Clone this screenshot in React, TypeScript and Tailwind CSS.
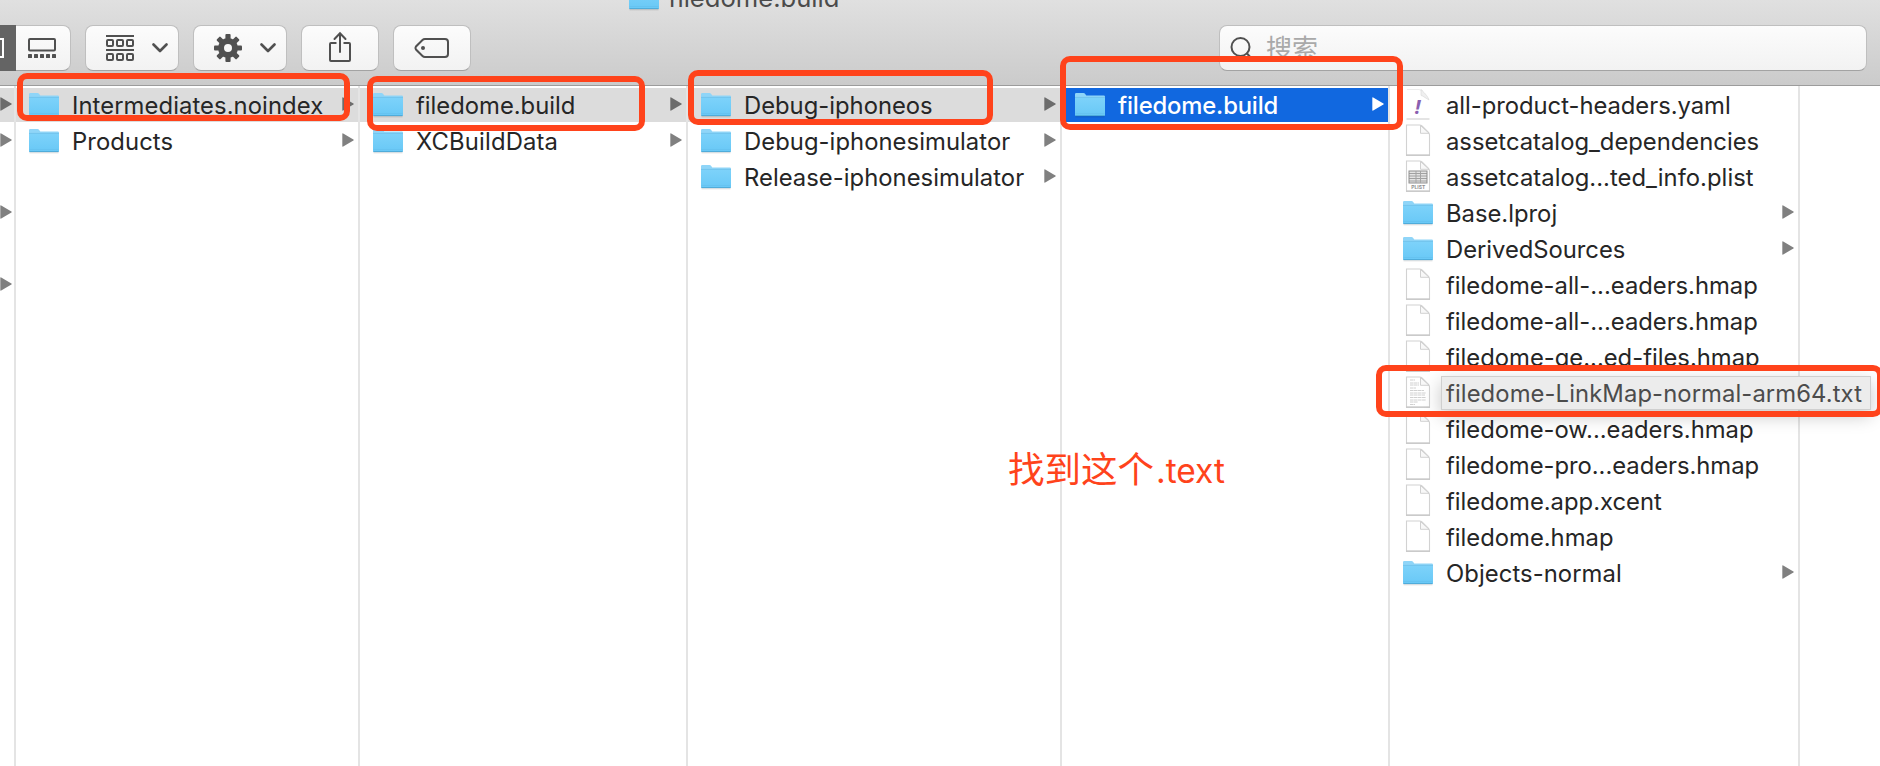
import clsx from 'clsx';

type Kind = 'folder' | 'file' | 'yaml' | 'plist' | 'txt' | 'none';

type Item = {
  name: string;
  kind: Kind;
  tracking?: string;
  state?: 'path' | 'active' | 'hover';
};

type Column = {
  id: string;
  width: string;
  items: Item[];
};

const columns: Column[] = [
  {
    id: 'root',
    width: 'w-4',
    items: [
      { name: '', kind: 'folder', state: 'path' },
      { name: '', kind: 'folder' },
      { name: '', kind: 'none' },
      { name: '', kind: 'folder' },
      { name: '', kind: 'none' },
      { name: '', kind: 'folder' },
    ],
  },
  {
    id: 'build',
    width: 'w-[344px]',
    items: [
      { name: 'Intermediates.noindex', kind: 'folder', state: 'path', tracking: 'tracking-[0.08px]' },
      { name: 'Products', kind: 'folder', tracking: 'tracking-[0.1px]' },
    ],
  },
  {
    id: 'intermediates',
    width: 'w-[328px]',
    items: [
      { name: 'filedome.build', kind: 'folder', state: 'path' },
      { name: 'XCBuildData', kind: 'folder', tracking: 'tracking-[0.16px]' },
    ],
  },
  {
    id: 'project',
    width: 'w-[374px]',
    items: [
      { name: 'Debug-iphoneos', kind: 'folder', state: 'path' },
      { name: 'Debug-iphonesimulator', kind: 'folder', tracking: 'tracking-[0.06px]' },
      { name: 'Release-iphonesimulator', kind: 'folder', tracking: 'tracking-[0.04px]' },
    ],
  },
  {
    id: 'configuration',
    width: 'w-[328px]',
    items: [{ name: 'filedome.build', kind: 'folder', state: 'active', tracking: 'tracking-[-0.15px]' }],
  },
  {
    id: 'target',
    width: 'w-[410px]',
    items: [
      { name: 'all-product-headers.yaml', kind: 'yaml', tracking: 'tracking-[-0.03px]' },
      { name: 'assetcatalog_dependencies', kind: 'file' },
      { name: 'assetcatalog...ted_info.plist', kind: 'plist', tracking: 'tracking-[0.03px]' },
      { name: 'Base.lproj', kind: 'folder' },
      { name: 'DerivedSources', kind: 'folder', tracking: 'tracking-[-0.03px]' },
      { name: 'filedome-all-...eaders.hmap', kind: 'file', tracking: 'tracking-[-0.02px]' },
      { name: 'filedome-all-...eaders.hmap', kind: 'file', tracking: 'tracking-[-0.02px]' },
      { name: 'filedome-ge...ed-files.hmap', kind: 'file' },
      { name: 'filedome-LinkMap-normal-arm64.txt', kind: 'txt', state: 'hover', tracking: 'tracking-[0.1px]' },
      { name: 'filedome-ow...eaders.hmap', kind: 'file', tracking: 'tracking-[-0.02px]' },
      { name: 'filedome-pro...eaders.hmap', kind: 'file', tracking: 'tracking-[-0.03px]' },
      { name: 'filedome.app.xcent', kind: 'file' },
      { name: 'filedome.hmap', kind: 'file' },
      { name: 'Objects-normal', kind: 'folder', tracking: 'tracking-[0.08px]' },
    ],
  },
];

function FolderIcon() {
  return (
    <svg width="30" height="26" viewBox="0 0 30 26" className="shrink-0">
      <defs>
        <linearGradient id="folder" x1="0" y1="0" x2="0" y2="1">
          <stop offset="0" stopColor="#7dd2fa" />
          <stop offset="1" stopColor="#68c8f6" />
        </linearGradient>
      </defs>
      <path d="M0.5 24.8h29" stroke="#000" strokeOpacity="0.15" />
      <path d="M0 2.2Q0 1 1.2 1H8.5Q9.3 1 9.8 1.6L11.3 3.6H28.8Q30 3.6 30 4.8V10H0z" fill="#8fd5f8" />
      <path d="M0 5.6H30V23Q30 24 29 24H1Q0 24 0 23z" fill="url(#folder)" />
      <path d="M0 5.4H30" stroke="#6abde8" strokeWidth="0.7" />
      <path d="M0.4 23.6h29.2" stroke="#4ba5d2" strokeWidth="0.9" />
      <path d="M0.5 21.5h29" stroke="#62bdea" strokeWidth="0.5" />
    </svg>
  );
}

function FileIcon({ kind }: { kind: Kind }) {
  // yaml has its own artwork: no side borders, only the fold and a base line
  if (kind === 'yaml') {
    return (
      <svg width="26" height="32" viewBox="0 0 26 32" className="mb-px shrink-0">
        <path d="M2 1.5H14L18 3" fill="none" stroke="#ececec" />
        <path d="M16 1.5V7Q16 8 17.5 8L24 12Q23 8 16 1.5z" fill="#efefef" stroke="#d6d6d6" strokeWidth="0.6" />
        <path d="M1.5 31H24.5" stroke="#c9c9c9" strokeWidth="1" />
        <text x="9.8" y="26" className="font-['Open_Sans'] text-[20px] font-bold italic" fill="#8a5fb0">
          !
        </text>
      </svg>
    );
  }

  return (
    <svg width="26" height="32" viewBox="0 0 26 32" className="mb-px shrink-0">
      <path
        d="M1.5 1H14.5Q16 1 17 2L23.5 8.3Q24.5 9.5 24.5 11V31H1.5z"
        fill="#fff"
        stroke="#d2d2d2"
        strokeWidth="1.1"
      />
      <path d="M1 31.2H25" stroke="#bdbdbd" strokeWidth="1" />
      <path d="M15.5 1.5V9.3H24z" fill="#f8f8f8" stroke="#cccccc" strokeWidth="0.9" strokeLinejoin="round" />
      {kind === 'plist' && (
        <g>
          <rect x="4" y="11" width="18" height="12" fill="#e4e4e4" stroke="#8f8f8f" />
          <path d="M4 13.5H22M4 16H22M4 18.5H22M4 21H22" stroke="#8f8f8f" strokeWidth="0.8" />
          <path d="M11 11V23M15.5 11V23" stroke="#a5a5a5" strokeWidth="1" />
          <text x="6.2" y="29.3" className="font-['Inter'] text-[5px] font-bold" fill="#8f8f8f">
            PLIST
          </text>
        </g>
      )}
      {kind === 'txt' && (
        <path
          d="M5 4h5M5 7h9M5 9h9M5 12h6M5 14.5h14M5 17h16M5 19h15M5 21.5h16M5 24h16M5 26h8M5 28.5h5"
          stroke="#c4c4c4"
          strokeWidth="0.8"
          strokeDasharray="3.5 0.4"
        />
      )}
    </svg>
  );
}

function Arrow({ className }: { className: string }) {
  return (
    <svg width="12" height="14" viewBox="0 0 12 14" className={clsx('shrink-0', className)}>
      <path d="M0.3 0.9Q0.3 0 1.2 0.5L11.4 6.4Q12.2 7 11.4 7.6L1.2 13.5Q0.3 14 0.3 13.1z" fill="currentColor" />
    </svg>
  );
}

function Row({ item }: { item: Item }) {
  const { name, kind, state } = item;
  return (
    <li className="h-9 py-px">
      <div
        className={clsx(
          'flex h-full items-center justify-between pr-1',
          state === 'path' && 'bg-[#dcdcdc]',
          state === 'active' && 'bg-[#1168e0]',
        )}
      >
        {name ? (
          <div className="flex items-center pl-[13px]">
            <span className="flex w-[30px] justify-center pb-px">
              {kind === 'folder' ? <FolderIcon /> : <FileIcon kind={kind} />}
            </span>
            {state === 'hover' ? (
              <span className="relative ml-2 flex h-[34px] w-[430px] shrink-0 items-center border border-[#cfcfcf] bg-[#ececec] pt-0.5 pl-1 text-[#4c4c4c] shadow-[0_6px_18px_rgba(0,0,0,0.22)]">
                <span className={clsx('whitespace-nowrap', item.tracking)}>{name}</span>
              </span>
            ) : (
              <span
                className={clsx(
                  'ml-[13px] pt-0.5 whitespace-nowrap',
                  item.tracking,
                  state === 'active' ? 'font-medium text-white' : 'text-[#262626]',
                )}
              >
                {name}
              </span>
            )}
          </div>
        ) : (
          <span />
        )}
        {kind === 'folder' && (
          <Arrow
            className={clsx(
              'mb-0.5',
              state === 'active' ? 'text-white' : state === 'path' ? 'text-[#6c6c6c]' : 'text-[#808080]',
            )}
          />
        )}
      </div>
    </li>
  );
}

function Chevron() {
  return (
    <svg width="16" height="10" viewBox="0 0 16 10" fill="none">
      <path d="M1.5 1.5L8 8L14.5 1.5" stroke="#505050" strokeWidth="2.6" strokeLinecap="round" strokeLinejoin="round" />
    </svg>
  );
}

function GroupIcon() {
  return (
    <svg width="28" height="26" viewBox="0 0 28 26" fill="none" stroke="#505050" strokeWidth="2">
      <path d="M0 1H28M0 15H28" />
      {[5, 19].map((y) =>
        [1, 11, 21].map((x) => <rect key={`${x}-${y}`} x={x} y={y} width="6" height="6" rx="1" />),
      )}
    </svg>
  );
}

function GearIcon() {
  return (
    <svg width="28" height="28" viewBox="-14 -14 28 28">
      <circle r="7" fill="none" stroke="#505050" strokeWidth="6" />
      {[0, 45, 90, 135, 180, 225, 270, 315].map((a) => (
        <rect key={a} x="-2.6" y="-14" width="5.2" height="6" rx="1" fill="#505050" transform={`rotate(${a})`} />
      ))}
    </svg>
  );
}

const toolButton =
  'flex h-[46px] items-center rounded-[8px] border border-[#bfbfbf] border-b-[#a3a3a3] bg-linear-to-b from-[#fcfcfc] to-[#f2f2f2]';

function Toolbar() {
  return (
    <header className="h-[86px] overflow-hidden border-b border-[#9c9c9c] bg-linear-to-b from-[#e0e0e0] to-[#cbcbcb]">
      <div className="-mt-4 flex h-[41px] pl-[629px]">
        <div className="flex h-7 items-center gap-[9px] text-[25.6px] text-[#4b4b4b]">
          <FolderIcon />
          <span>filedome.build</span>
        </div>
      </div>
      <div className="flex items-center">
        <div className="flex h-[46px] w-[71px]">
          <div className="flex w-4 items-center bg-[#646464]">
            <svg width="16" height="22" viewBox="0 0 16 22" fill="none">
              <path d="M0 2H3V20H0" stroke="#fff" strokeWidth="2" />
            </svg>
          </div>
          <div className="flex w-[55px] items-center rounded-r-[8px] border border-l-0 border-[#bfbfbf] border-b-[#a3a3a3] bg-linear-to-b from-[#fcfcfc] to-[#f2f2f2] pl-3">
            <svg width="28" height="20" viewBox="0 0 28 20" fill="none">
              <rect x="1" y="1" width="26" height="11.5" rx="1" stroke="#505050" strokeWidth="2" />
              {[0, 6, 12, 18, 24].map((x) => (
                <rect key={x} x={x} y="16" width="4" height="4" rx="0.6" fill="#505050" />
              ))}
            </svg>
          </div>
        </div>
        <div className={clsx(toolButton, 'ml-3.5 w-[94px] justify-between pr-2.5 pl-5')}>
          <GroupIcon />
          <Chevron />
        </div>
        <div className={clsx(toolButton, 'ml-3.5 w-[94px] justify-between pr-2.5 pl-5')}>
          <GearIcon />
          <Chevron />
        </div>
        <div className={clsx(toolButton, 'ml-3.5 w-[78px] justify-center')}>
          <svg width="24" height="32" viewBox="0 0 24 32" fill="none" stroke="#505050" strokeWidth="2" className="mb-0.5">
            <path d="M8.5 12H3Q2 12 2 13V29Q2 30 3 30H21Q22 30 22 29V13Q22 12 21 12H15.5" />
            <path d="M12 21V2.5M6.5 8L12 2.2L17.5 8" strokeLinecap="round" />
          </svg>
        </div>
        <div className={clsx(toolButton, 'ml-3.5 w-[78px] justify-center')}>
          <svg width="36" height="22" viewBox="0 0 36 22" fill="none">
            <path
              d="M11 2H31Q34 2 34 5V17Q34 20 31 20H11Q9.5 20 8.5 19L2 12.5Q1 11 2 9.5L8.5 3Q9.5 2 11 2z"
              stroke="#505050"
              strokeWidth="2"
            />
            <circle cx="9" cy="11" r="2" fill="#505050" />
          </svg>
        </div>
        <div className={clsx(toolButton, 'ml-[748px] w-[648px] pl-2.5')}>
          <svg width="24" height="24" viewBox="0 0 24 24" fill="none" stroke="#505050" strokeWidth="2">
            <circle cx="10.5" cy="11" r="9" />
            <path d="M17 17.5L22 23" strokeLinecap="round" />
          </svg>
          <span className="ml-3 pt-0.5 text-[26px] leading-none text-[#a9a9a9]">搜索</span>
        </div>
      </div>
    </header>
  );
}

const marks = [
  'left-[17px] top-[73px] w-[333px] h-12',
  'left-[367px] top-[76px] w-[278px] h-[55px]',
  'left-[688px] top-[70px] w-[305px] h-[55px]',
  'left-[1060px] top-[56px] w-[343px] h-[74px]',
  'left-[1376px] top-[365px] w-[507px] h-[52px]',
];

export default function App() {
  return (
    <div className="relative h-[766px] w-[1880px] overflow-hidden bg-white font-['Inter','Noto_Sans_CJK_SC',sans-serif]">
      <Toolbar />
      <main className="flex h-[680px]">
        {columns.map((column) => (
          <ul
            key={column.id}
            className={clsx('shrink-0 border-r-2 border-[#e4e4e4] pt-px text-[23.8px] leading-8', column.width)}
          >
            {column.items.map((item, i) => (
              <Row key={i} item={item} />
            ))}
          </ul>
        ))}
      </main>

      {/* red annotations drawn over the window */}
      {marks.map((mark) => (
        <div key={mark} className={clsx('absolute rounded-[10px] border-[6px] border-[#ff431b]', mark)} />
      ))}
      <p className="absolute top-[447px] left-[1008px] text-[36.5px] leading-[46px] whitespace-nowrap text-[#ff431b]">
        找到这个<span className="ml-0.5 text-[33.5px]">.text</span>
      </p>
    </div>
  );
}
